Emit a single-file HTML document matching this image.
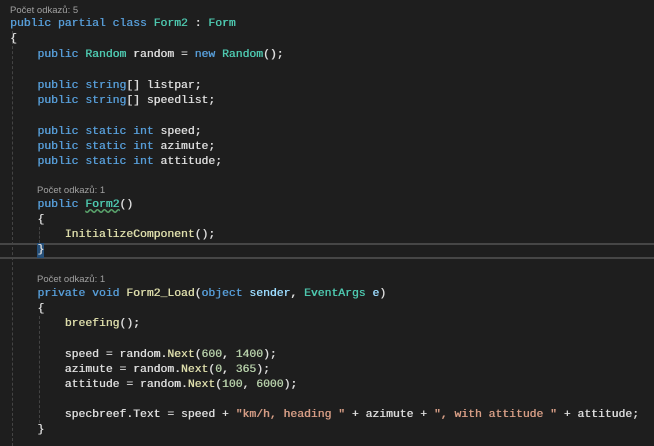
<!DOCTYPE html>
<html><head><meta charset="utf-8"><style>
body{margin:0;width:654px;height:446px;background:#1e1e1e;overflow:hidden;position:relative}
.l{position:absolute;left:10px;height:15px;line-height:15px;font-family:"Liberation Mono",monospace;font-size:11.4px;color:#dcdcdc;white-space:pre;margin-top:-7.5px;text-shadow:0.4px 0 0 currentColor}
.c{position:absolute;left:10px;font-family:"Liberation Sans",sans-serif;font-size:9.5px;color:#a0a0a0;white-space:pre;line-height:12px;margin-top:-6px}
.k{color:#569cd6}.t{color:#4ec9b0}.m{color:#dcdcaa}.p{color:#9cdcfe}.s{color:#d69d85}.n{color:#b5cea8}
.g{position:absolute;width:0;border-left:1px dashed #444}
.w{text-decoration:underline wavy #5fa05f;text-underline-offset:2px}
</style></head><body>
<div class="g" style="left:12px;top:31px;height:415px"></div>
<div class="g" style="left:39px;top:227px;height:16px"></div>
<div class="g" style="left:39px;top:316px;height:107px"></div>
<div style="position:absolute;left:0;top:243px;width:654px;height:12px;border-top:2px solid #464646;border-bottom:2px solid #464646"></div>
<div style="position:absolute;left:37px;top:243px;width:7px;height:15px;background:#264f78"></div>
<div class="c" style="top:11px">Počet odkazů: 5</div>
<div class="l" style="top:24px"><span class="k">public partial class</span> <span class="t">Form2</span> : <span class="t">Form</span></div>
<div class="l" style="top:39px">{</div>
<div class="l" style="top:55px">    <span class="k">public</span> <span class="t">Random</span> random = <span class="k">new</span> <span class="t">Random</span>();</div>
<div class="l" style="top:86px">    <span class="k">public string</span>[] listpar;</div>
<div class="l" style="top:101px">    <span class="k">public string</span>[] speedlist;</div>
<div class="l" style="top:132px">    <span class="k">public static int</span> speed;</div>
<div class="l" style="top:147px">    <span class="k">public static int</span> azimute;</div>
<div class="l" style="top:162px">    <span class="k">public static int</span> attitude;</div>
<div class="c" style="top:191px;left:37px">Počet odkazů: 1</div>
<div class="l" style="top:205px">    <span class="k">public</span> <span class="t w">Form2</span>()</div>
<div class="l" style="top:220px">    {</div>
<div class="l" style="top:235px">        <span class="m">InitializeComponent</span>();</div>
<div class="l" style="top:250px">    }</div>
<div class="c" style="top:280px;left:37px">Počet odkazů: 1</div>
<div class="l" style="top:294px">    <span class="k">private void</span> <span class="m">Form2_Load</span>(<span class="k">object</span> <span class="p">sender</span>, <span class="t">EventArgs</span> <span class="p">e</span>)</div>
<div class="l" style="top:309px">    {</div>
<div class="l" style="top:324px">        <span class="m">breefing</span>();</div>
<div class="l" style="top:355px">        speed = random.<span class="m">Next</span>(<span class="n">600</span>, <span class="n">1400</span>);</div>
<div class="l" style="top:370px">        azimute = random.<span class="m">Next</span>(<span class="n">0</span>, <span class="n">365</span>);</div>
<div class="l" style="top:385px">        attitude = random.<span class="m">Next</span>(<span class="n">100</span>, <span class="n">6000</span>);</div>
<div class="l" style="top:415px">        specbreef.Text = speed + <span class="s">"km/h, heading "</span> + azimute + <span class="s">", with attitude "</span> + attitude;</div>
<div class="l" style="top:430px">    }</div>
</body></html>
